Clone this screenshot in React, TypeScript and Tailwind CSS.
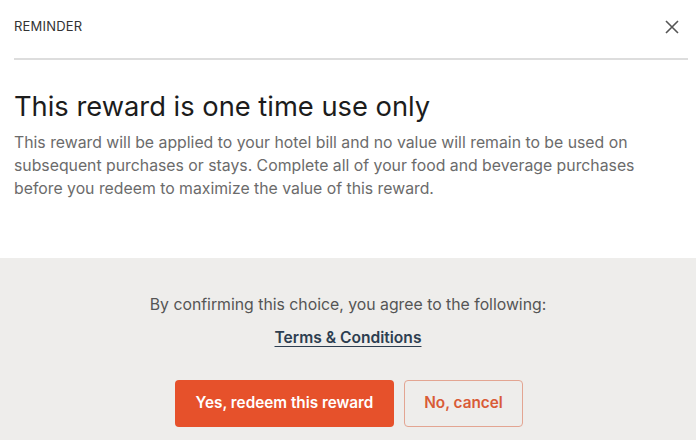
import React from "react";

export default function App() {
  return (
    <div
      className="w-[696px] h-[440px] bg-white flex flex-col overflow-hidden"
      style={{ fontFamily: "Inter, 'Noto Sans', sans-serif" }}
    >
      <div className="px-[14px]">
        <div className="h-[58px] flex items-center justify-between">
          <span className="text-[13px] text-[#333] tracking-[0.2px] -mt-[4px]">REMINDER</span>
          <button className="w-[24px] h-[24px] flex items-center justify-center mr-[-2px] -mt-[4px] text-[#555]">
            <svg width="14" height="14" viewBox="0 0 14 14" fill="none" stroke="currentColor" strokeWidth="1.6">
              <path d="M1 1 L13 13 M13 1 L1 13" />
            </svg>
          </button>
        </div>
        <div className="h-[2px] bg-[#dddddd] mr-[-6px]" />
        <h1 className="mt-[30px] text-[27.3px] leading-[33px] text-[#1c1c1c] font-normal">
          This reward is one time use only
        </h1>
        <p className="mt-[8px] text-[15.8px] leading-[23px] text-[#6b6b6b] w-[660px]">
          This reward will be applied to your hotel bill and no value will remain to be used on
          <br />
          subsequent purchases or stays. Complete all of your food and beverage purchases
          <br />
          before you redeem to maximize the value of this reward.
        </p>
      </div>
      <div className="mt-auto h-[182px] bg-[#eeedeb] flex flex-col items-center">
        <p className="mt-[35px] text-[15.8px] leading-[24px] text-[#555]">
          By confirming this choice, you agree to the following:
        </p>
        <a className="mt-[9px] text-[15.6px] leading-[24px] font-semibold text-[#2d3e50] underline underline-offset-[3px]">
          Terms &amp; Conditions
        </a>
        <div className="mt-[30px] flex gap-[10px] ml-[2px]">
          <button className="w-[219px] h-[47px] rounded-[4px] bg-[#e6512b] text-white text-[15.3px] font-semibold">
            Yes, redeem this reward
          </button>
          <button className="w-[119px] h-[47px] rounded-[4px] border border-[#e3a592] text-[#d95b37] text-[15.3px] font-semibold">
            No, cancel
          </button>
        </div>
      </div>
    </div>
  );
}
